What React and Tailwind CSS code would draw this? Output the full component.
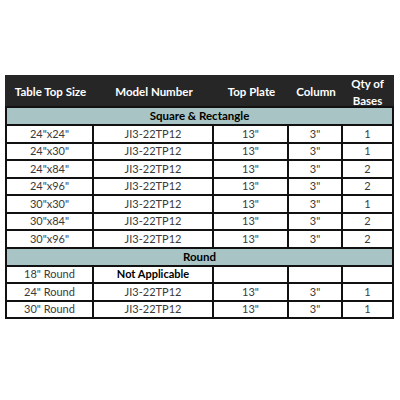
import React from 'react';

const square = [
  ['24"x24"', 'JI3-22TP12', '13"', '3"', '1'],
  ['24"x30"', 'JI3-22TP12', '13"', '3"', '1'],
  ['24"x84"', 'JI3-22TP12', '13"', '3"', '2'],
  ['24"x96"', 'JI3-22TP12', '13"', '3"', '2'],
  ['30"x30"', 'JI3-22TP12', '13"', '3"', '1'],
  ['30"x84"', 'JI3-22TP12', '13"', '3"', '2'],
  ['30"x96"', 'JI3-22TP12', '13"', '3"', '2'],
];

const round = [
  ['18" Round', 'Not Applicable', '', '', ''],
  ['24" Round', 'JI3-22TP12', '13"', '3"', '1'],
  ['30" Round', 'JI3-22TP12', '13"', '3"', '1'],
];

const Header = ({ children }) => (
  <div className="bg-[#262626] text-white font-bold text-[11.5px] leading-[17px] flex items-center justify-center text-center h-[29px]">
    {children}
  </div>
);

const Section = ({ title }) => (
  <div className="col-span-5 bg-[#a9c4c4] text-black font-bold text-[11.5px] h-[16px] flex items-center justify-center">
    {title}
  </div>
);

const Row = ({ cells }) =>
  cells.map((c, i) => (
    <div
      key={i}
      className={`bg-white h-[15.5px] flex items-center justify-center text-[11px] ${
        c === 'Not Applicable' ? 'font-bold text-black text-[11.5px]' : 'text-[#3a3a3a]'
      }`}
    >
      {c}
    </div>
  ));

export default function App() {
  return (
    <div className="w-[400px] h-[400px] bg-white pt-[75px] pl-[5px]" style={{ fontFamily: 'Lato, "Open Sans", sans-serif' }}>
      <div className="w-[389px] bg-[#111] p-[2px] pt-0 grid grid-cols-[85px_118px_73px_52px_49px] gap-[2px]">
        <div className="col-span-5 grid grid-cols-[87px_120px_75px_54px_49px] bg-[#262626] h-[31px] items-center -mx-[2px] px-[2px] pt-[2px]">
          <Header>Table Top Size</Header>
          <Header>Model Number</Header>
          <Header>Top Plate</Header>
          <Header>Column</Header>
          <Header>
            <span>
              Qty of
              <br />
              Bases
            </span>
          </Header>
        </div>
        <Section title="Square & Rectangle" />
        {square.map((r, i) => (
          <Row key={'s' + i} cells={r} />
        ))}
        <Section title="Round" />
        {round.map((r, i) => (
          <Row key={'r' + i} cells={r} />
        ))}
      </div>
    </div>
  );
}
